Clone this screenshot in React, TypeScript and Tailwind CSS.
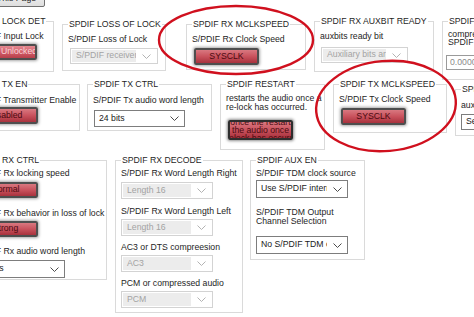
import React from "react";

function Chevron({ color }: { color: string }) {
  return (
    <svg width="9" height="5" viewBox="0 0 9 5">
      <polyline points="0.5,0.5 4.5,4.5 8.5,0.5" fill="none" stroke={color} strokeWidth="1" />
    </svg>
  );
}

function Group({ legend, className, children }: { legend: string; className: string; children: React.ReactNode }) {
  return (
    <fieldset className={`shrink-0 min-w-0 border border-[#dadada] px-[5px] ${className}`}>
      <legend className="px-[1px] whitespace-nowrap leading-[11px] text-[#1f1f1f]">{legend}</legend>
      <div className="flex flex-col items-start">{children}</div>
    </fieldset>
  );
}

function Label({ children, className = "" }: { children: React.ReactNode; className?: string }) {
  return <div className={`whitespace-nowrap leading-[11px] text-[#1e1e1e] ${className}`}>{children}</div>;
}

function Select({ text, className }: { text: string; className: string }) {
  return (
    <div className={`flex shrink-0 items-center border border-[#7d7d7d] bg-white ${className}`}>
      <span className="flex-1 overflow-hidden whitespace-nowrap pl-[4px] text-[#1a1a1a]">{text}</span>
      <span className="flex w-[20px] justify-center">
        <Chevron color="#4a4a4a" />
      </span>
    </div>
  );
}

function DisabledSelect({ text, className }: { text: string; className: string }) {
  return (
    <div className={`flex shrink-0 border border-[#d3d3d3] bg-white p-[1px] ${className}`}>
      <span className="flex flex-1 items-center overflow-hidden whitespace-nowrap bg-[#ececec] pl-[4px] text-[#a3a3a3]">{text}</span>
      <span className="flex w-[20px] items-center justify-center">
        <Chevron color="#b3b3b3" />
      </span>
    </div>
  );
}

function RedButton({ text, className, light = false }: { text: string; className: string; light?: boolean }) {
  return (
    <div
      className={`flex shrink-0 items-center justify-center overflow-hidden rounded-[2px] border-2 border-[#4e4e4e] shadow-[0_0_3px_1px_rgba(0,0,0,0.35)] ${
        light
          ? "bg-[linear-gradient(180deg,#e48a92_0%,#d35c67_50%,#b8404b_100%)] text-[#f6d4d7]"
          : "bg-[linear-gradient(180deg,#d97880_0%,#c9525d_50%,#a8323d_100%)] text-[#4a0a10]"
      } ${className}`}
    >
      <span className="whitespace-nowrap">{text}</span>
    </div>
  );
}

export default function App() {
  return (
    <div className="relative flex h-[317px] w-[474px] flex-col overflow-hidden bg-white font-['Liberation_Sans',Arial,sans-serif] text-[8.7px]">
      {/* top button */}
      <div className="ml-[-12px] mt-[-10px] flex h-[17px] w-[57px] shrink-0 items-end justify-center rounded-[2px] border border-[#707070] bg-[linear-gradient(180deg,#f5f5f5,#dedede)] pb-[1px] text-[#1e1e1e]">
        This Page
      </div>

      {/* row 1 */}
      <div className="flex shrink-0 items-start">
        <Group legend="SPDIF LOCK DET" className="ml-[-33px] mt-[9px] h-[56px] w-[87px]">
          <Label className="mt-[3.5px]">S/PDIF Input Lock</Label>
          <RedButton light text="SPDIF Unlocked" className="mt-[2.5px] h-[16px] w-[64px]" />
        </Group>
        <Group legend="SPDIF LOSS OF LOCK" className="ml-[8px] mt-[12px] h-[52px] w-[104px]">
          <Label className="mt-[3.5px]">S/PDIF Loss of Lock</Label>
          <DisabledSelect text="S/PDIF receiver is locked" className="ml-[2px] mt-[3.5px] h-[16px] w-[88px]" />
        </Group>
        <Group legend="SPDIF RX MCLKSPEED" className="ml-[20px] mt-[12px] h-[51px] w-[120px]">
          <Label className="mt-[3.5px]">S/PDIF Rx Clock Speed</Label>
          <RedButton text="SYSCLK" className="ml-[2px] mt-[3.5px] h-[17px] w-[65px]" />
        </Group>
        <Group legend="SPDIF RX AUXBIT READY" className="ml-[8px] mt-[9px] h-[56px] w-[120px]">
          <Label className="mt-[3.5px]">auxbits ready bit</Label>
          <DisabledSelect text="Auxiliary bits are not ready" className="ml-[1px] mt-[5.5px] h-[16px] w-[87px]" />
        </Group>
        <Group legend="SPDIF COMPRESSED" className="ml-[8px] mt-[9px] h-[64px] w-[60px]">
          <div className="mt-[2.5px] whitespace-nowrap leading-[8px] text-[#1e1e1e]">
            <div>compressed</div>
            <div>SPDIF data</div>
          </div>
          <div className="ml-[-2px] mt-[9.5px] flex h-[15px] w-[60px] shrink-0 items-center border border-[#9a9a9a] bg-white pl-[3px] text-[#8a8a8a]">
            0.000000
          </div>
        </Group>
      </div>

      {/* row 2 */}
      <div className="flex shrink-0 items-start">
        <Group legend="SPDIF TX EN" className="ml-[-33px] mt-[-1.5px] h-[52.5px] w-[113px]">
          <Label className="mt-[5px]">S/PDIF Transmitter Enable</Label>
          <RedButton text="Disabled" className="mt-[1.5px] h-[17px] w-[65px]" />
        </Group>
        <Group legend="SPDIF TX CTRL" className="ml-[7px] mt-[-1.5px] h-[52.5px] w-[125px]">
          <Label className="mt-[5px]">S/PDIF Tx audio word length</Label>
          <Select text="24 bits" className="ml-[1px] mt-[4.5px] h-[17px] w-[91px]" />
        </Group>
        <Group legend="SPDIF RESTART" className="ml-[8px] mt-[-1.5px] h-[71.5px] w-[105px]">
          <div className="mt-[4px] whitespace-nowrap leading-[9px] text-[#1e1e1e]">
            <div>restarts the audio once a</div>
            <div>re-lock has occurred.</div>
          </div>
          <div className="ml-[2px] mt-[8.5px] flex h-[20px] w-[65px] shrink-0 flex-col items-center justify-center overflow-hidden rounded-[2px] border-2 border-[#2e2e2e] bg-[linear-gradient(180deg,#d97880_0%,#c9525d_50%,#a8323d_100%)] text-center leading-[8px] text-[#4a0a10] shadow-[0_0_3px_1px_rgba(0,0,0,0.45)]">
            <div className="whitespace-nowrap">once the restart</div>
            <div className="whitespace-nowrap">the audio once</div>
            <div className="whitespace-nowrap">a relock has occurred</div>
          </div>
        </Group>
        <Group legend="SPDIF TX MCLKSPEED" className="ml-[8px] mt-[-1.5px] h-[54.5px] w-[114px]">
          <Label className="mt-[4px]">S/PDIF Tx Clock Speed</Label>
          <RedButton text="SYSCLK" className="ml-[2px] mt-[3.5px] h-[17px] w-[65px]" />
        </Group>
        <Group legend="SPDIF AUX CTRL" className="ml-[8px] mt-[3.5px] h-[52.5px] w-[60px]">
          <Label className="mt-[5px]">auxiliary</Label>
          <Select text="Select" className="mt-[3.5px] h-[16px] w-[92px]" />
        </Group>
      </div>

      {/* row 3 */}
      <div className="flex shrink-0 items-start">
        <Group legend="SPDIF RX CTRL" className="ml-[-33px] mt-[4.5px] h-[125.5px] w-[140px]">
          <Label className="mt-[2px]">S/PDIF Rx locking speed</Label>
          <RedButton text="Normal" className="mt-[3.5px] h-[16px] w-[65px]" />
          <Label className="mt-[9.5px]">S/PDIF Rx behavior in loss of lock</Label>
          <RedButton text="Strong" className="mt-[2.5px] h-[16px] w-[65px]" />
          <Label className="mt-[8.5px]">S/PDIF Rx audio word length</Label>
          <Select text="24 bits" className="mt-[3.5px] h-[18px] w-[92px]" />
        </Group>
        <Group legend="SPDIF RX DECODE" className="ml-[8px] mt-[4.5px] h-[158.5px] w-[128px]">
          <Label className="mt-[2px]">S/PDIF Rx Word Length Right</Label>
          <DisabledSelect text="Length 16" className="mt-[3.5px] h-[17px] w-[92px]" />
          <Label className="mt-[6.5px]">S/PDIF Rx Word Length Left</Label>
          <DisabledSelect text="Length 16" className="mt-[2.5px] h-[17px] w-[92px]" />
          <Label className="mt-[5.5px]">AC3 or DTS compreesion</Label>
          <DisabledSelect text="AC3" className="mt-[2.5px] h-[17px] w-[92px]" />
          <Label className="mt-[5.5px]">PCM or compressed audio</Label>
          <DisabledSelect text="PCM" className="mt-[2.5px] h-[17px] w-[92px]" />
        </Group>
        <Group legend="SPDIF AUX EN" className="ml-[7px] mt-[4.5px] h-[105.5px] w-[115px]">
          <Label className="mt-[2px]">S/PDIF TDM clock source</Label>
          <Select text="Use S/PDIF internal clock" className="mt-[1.5px] h-[18px] w-[92px]" />
          <div className="mt-[10px] whitespace-nowrap leading-[9px] text-[#1e1e1e]">
            <div>S/PDIF TDM Output</div>
            <div>Channel Selection</div>
          </div>
          <Select text="No S/PDIF TDM output" className="mt-[10px] h-[18px] w-[92px]" />
        </Group>
      </div>

      {/* red annotation ellipses */}
      <svg className="pointer-events-none absolute left-0 top-0" width="474" height="317" viewBox="0 0 474 317">
        <ellipse cx="236" cy="40" rx="77" ry="34" fill="none" stroke="#d0101e" strokeWidth="2.4" />
        <ellipse cx="386" cy="106" rx="70" ry="45" fill="none" stroke="#d0101e" strokeWidth="2.4" transform="rotate(-5 386 106)" />
      </svg>
    </div>
  );
}
